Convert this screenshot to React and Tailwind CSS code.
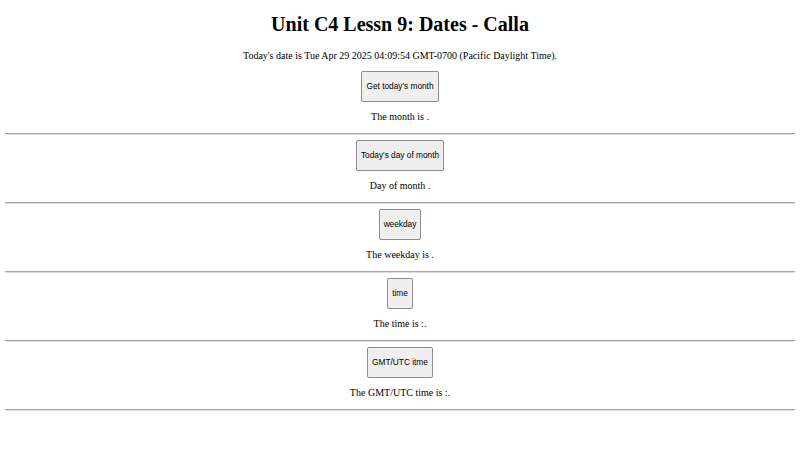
const sections = [
  { label: "Get today's month", text: "The month is ." },
  { label: "Today's day of month", text: "Day of month ." },
  { label: "weekday", text: "The weekday is ." },
  { label: "time", text: "The time is :." },
  { label: "GMT/UTC itme", text: "The GMT/UTC time is :." },
];

const Section = ({ label, text, first }) => (
  <div className="flex flex-col items-center">
    <button
      className={`${first ? "mt-[8px]" : "mt-[5px]"} h-[31px] px-[4px] bg-[#efefef] border border-[#8c8c8c] rounded-[2px] text-[8.3px] text-black font-['Liberation_Sans',Arial,sans-serif]`}
    >
      {label}
    </button>
    <p className="mt-[7px] text-[10px] leading-[15px]">{text}</p>
    <hr className="mt-[9px] self-stretch mx-[5px] h-[2px] border-0 border-t border-t-[#a6a6a6] border-b border-b-[#dedede]" />
  </div>
);

export default function App() {
  return (
    <div className="w-[800px] h-[450px] bg-white text-black font-['Liberation_Serif','Times_New_Roman',serif] flex flex-col">
      <h1 className="mt-[10px] text-center text-[20px] leading-[28px] font-bold">
        Unit C4 Lessn 9: Dates - Calla
      </h1>
      <p className="mt-[10px] text-center text-[10px] leading-[15px]">
        Today's date is Tue Apr 29 2025 04:09:54 GMT-0700 (Pacific Daylight Time).
      </p>
      {sections.map((s, i) => (
        <Section key={s.label} label={s.label} text={s.text} first={i === 0} />
      ))}
    </div>
  );
}
